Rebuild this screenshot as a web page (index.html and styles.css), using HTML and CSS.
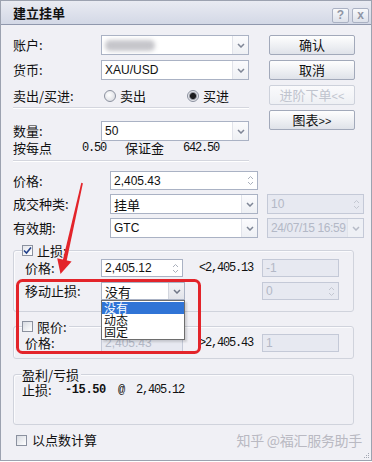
FILE: index.html
```html
<!DOCTYPE html>
<html lang="zh-CN">
<head>
    <meta charset="UTF-8">
    <meta name="viewport" content="width=device-width, initial-scale=1.0">
    <title>建立挂单</title>
    <link rel="stylesheet" href="styles.css">
</head>
<body>

<div class="dialog">
    <div class="titlebar">
        <span class="title">建立挂单</span>
        <div class="tb-btns">
            <span class="tb-btn">?</span>
            <span class="tb-btn">x</span>
        </div>
    </div>

    <div class="content">
        <div class="top">
            <div class="left">
                <div class="row">
                    <span>账户:</span>
                    <div class="field"><span class="val"><i class="blur"></i></span><span class="drop"><svg width="8" height="5"><path d="M1 1 L4 4 L7 1" stroke="#7f8696" stroke-width="1.5" fill="none"/></svg></span></div>
                </div>
                <div class="row r2">
                    <span>货币:</span>
                    <div class="field"><span class="val">XAU/USD</span><span class="drop"><svg width="8" height="5"><path d="M1 1 L4 4 L7 1" stroke="#7f8696" stroke-width="1.5" fill="none"/></svg></span></div>
                </div>
                <div class="row r3">
                    <span>卖出/买进:</span>
                    <div class="radios">
                        <label class="opt first"><i class="radio"></i>卖出</label>
                        <label class="opt"><i class="radio on"></i>买进</label>
                    </div>
                </div>
                <div class="sep"></div>
                <div class="row">
                    <span>数量:</span>
                    <div class="field"><span class="val">50</span><span class="drop"><svg width="8" height="5"><path d="M1 1 L4 4 L7 1" stroke="#7f8696" stroke-width="1.5" fill="none"/></svg></span></div>
                </div>
                <div class="info">
                    <span class="w69">按每点</span><span class="num w43">0.50</span><span class="w58">保证金</span><span class="num">642.50</span>
                </div>
                <div class="sep sep2"></div>
            </div>
            <div class="right">
                <button class="btn">确认</button>
                <button class="btn">取消</button>
                <button class="btn" disabled>进阶下单<span class="lat">&lt;&lt;</span></button>
                <button class="btn">图表<span class="lat">&gt;&gt;</span></button>
            </div>
        </div>

        <div class="grid3">
            <span>价格:</span>
            <div class="field h19"><span class="val">2,405.43</span><span class="arrows"><svg width="7" height="11"><path d="M1 4 L3.5 1.5 L6 4 M1 7 L3.5 9.5 L6 7" stroke="#aab0bc" stroke-width="1" fill="none"/></svg></span></div>
            <span></span>

            <span>成交种类:</span>
            <div class="field"><span class="val cn">挂单</span><span class="drop"><svg width="8" height="5"><path d="M1 1 L4 4 L7 1" stroke="#7f8696" stroke-width="1.5" fill="none"/></svg></span></div>
            <div class="field dis"><span class="val">10</span><span class="arrows"><svg width="7" height="11"><path d="M1 4 L3.5 1.5 L6 4 M1 7 L3.5 9.5 L6 7" stroke="#c3c7d1" stroke-width="1" fill="none"/></svg></span></div>

            <span>有效期:</span>
            <div class="field"><span class="val">GTC</span><span class="drop"><svg width="8" height="5"><path d="M1 1 L4 4 L7 1" stroke="#7f8696" stroke-width="1.5" fill="none"/></svg></span></div>
            <div class="field dis"><span class="val date">24/07/15 16:59</span><span class="drop"><svg width="8" height="5"><path d="M1 1 L4 4 L7 1" stroke="#b6bbc7" stroke-width="1.5" fill="none"/></svg></span></div>
        </div>

        <div class="group g1">
            <div class="legend"><i class="check on"><svg width="9" height="9"><path d="M1 4.5 L3.5 7 L8 1.5" stroke="#22418c" stroke-width="1.6" fill="none"/></svg></i>止损:</div>
            <div class="grow a">
                <span>价格:</span>
                <div class="field f82 h18"><span class="val">2,405.12</span><span class="arrows"><svg width="7" height="11"><path d="M1 4 L3.5 1.5 L6 4 M1 7 L3.5 9.5 L6 7" stroke="#aab0bc" stroke-width="1" fill="none"/></svg></span></div>
                <span class="num">&lt;2,405.13</span>
                <div class="field dis f77 h18"><span class="val">-1</span></div>
            </div>
            <div class="grow b">
                <span>移动止损:</span>
                <div class="combo-wrap">
                    <div class="field f84 h18"><span class="val cn">没有</span><span class="drop hot"><svg width="8" height="5"><path d="M1 1 L4 4 L7 1" stroke="#6f7686" stroke-width="1.5" fill="none"/></svg></span></div>
                    <ul class="list">
                        <li class="sel">没有</li>
                        <li>动态</li>
                        <li>固定</li>
                    </ul>
                </div>
                <span></span>
                <div class="field dis f77 h18"><span class="val">0</span><span class="arrows"><svg width="7" height="11"><path d="M1 4 L3.5 1.5 L6 4 M1 7 L3.5 9.5 L6 7" stroke="#c3c7d1" stroke-width="1" fill="none"/></svg></span></div>
            </div>
        </div>

        <div class="group g2">
            <div class="legend"><i class="check"></i>限价:</div>
            <div class="grow">
                <span>价格:</span>
                <div class="field dis f82 h18"><span class="val">2,405.43</span></div>
                <span class="num">&gt;2,405.43</span>
                <div class="field dis f77 h18"><span class="val">1</span></div>
            </div>
        </div>

        <div class="group g3">
            <div class="legend">盈利/亏损</div>
            <div class="pl">
                <span class="w43">止损:</span><span class="num b w53">-15.50</span><span class="num w18">@</span><span class="num">2,405.12</span>
            </div>
        </div>

        <div class="foot">
            <label class="opt"><i class="check"></i>以点数计算</label>
            <span class="wm">知乎 @福汇服务助手</span>
        </div>
    </div>

    <svg class="annot" width="372" height="462">
        <rect x="17.5" y="280.5" width="182" height="72" rx="5" fill="none" stroke="#e3242a" stroke-width="3"/>
        <polygon points="81.3,182.8 82.9,183.2 66.4,261.9 62.6,261.1" fill="#e3242a"/>
        <polygon points="60.5,274 57.2,258.2 71.6,261.6" fill="#e3242a"/>
    </svg>

    <svg class="grip" width="7" height="7"><path d="M5 1h1v1h-1zM3 3h1v1h-1zM5 3h1v1h-1zM1 5h1v1h-1zM3 5h1v1h-1zM5 5h1v1h-1z" fill="#a3a8b4"/></svg>
</div>

</body>
</html>
```

FILE: styles.css
```css
* { margin: 0; padding: 0; box-sizing: border-box; }
body {
    width: 372px; height: 462px; overflow: hidden; background: #fff;
    font: 13px/16px "Noto Sans CJK SC", sans-serif; color: #111;
}
.dialog {
    position: relative; width: 372px; height: 461px;
    border: 1px solid #9ca2b0; background: #f0f0f5;
}

/* title bar */
.titlebar {
    display: flex; align-items: center; justify-content: space-between;
    height: 24px; padding: 0 2px 0 12px;
    background: linear-gradient(#e9ebf2, #d3d8e6); border-bottom: 1px solid #9098ad;
}
.title { font-weight: bold; }
.tb-btns { display: flex; gap: 3px; align-self: flex-end; margin-bottom: 1px; }
.tb-btn {
    width: 17px; height: 15px; border: 1px solid #aab1c3; border-radius: 2px;
    background: linear-gradient(#f8f9fb, #dde1ea); color: #8f95a5;
    font: bold 12px/13px "Liberation Sans", sans-serif; text-align: center;
}

.content { padding: 10px 16px 0 12px; }
.top { display: flex; }
.left { width: 236px; }
.right { width: 86px; margin-left: 20px; display: flex; flex-direction: column; gap: 5px; }

.row { display: grid; grid-template-columns: 88px 148px; align-items: center; height: 20px; }
.r2 { margin-top: 5px; }
.r3 { margin-top: 6px; height: 19px; }
.sep { height: 2px; border-top: 1px solid #d4d6de; border-bottom: 1px solid #fff; margin: 2px 0 12px; }
.sep2 { margin: 5px 0 0; }
.info { display: flex; align-items: center; height: 14px; }
.w69 { width: 69px; } .w43 { width: 43px; } .w58 { width: 58px; }
.w53 { width: 53px; } .w18 { width: 18px; }
.num { font: 12px/14px "Liberation Mono", monospace; letter-spacing: -1.2px; }
.num.b { font-weight: bold; letter-spacing: -0.4px; }

/* inputs */
.field {
    display: flex; height: 20px; border: 1px solid #aab2c4; background: #fff;
    font: 12px "Liberation Sans", sans-serif; color: #111;
}
.h19 { height: 19px; } .h18 { height: 18px; }
.f82 { width: 82px; } .f84 { width: 84px; } .f77 { width: 77px; }
.val { flex: 1; display: flex; align-items: center; padding-left: 3px; white-space: nowrap; overflow: hidden; }
.val.cn { font: 13px "Noto Sans CJK SC", sans-serif; }
.val.date { letter-spacing: -0.4px; }
.drop {
    width: 16px; display: flex; align-items: center; justify-content: center;
    border-left: 1px solid #e1e3ea; background: linear-gradient(#fbfbfd, #eef0f4);
}
.drop.hot { background: linear-gradient(#f2f3f6, #e2e4ea); border-left-color: #d3d6de; }
.arrows { width: 14px; display: flex; align-items: center; justify-content: center; }
.dis { background: #e7e9f1; border-color: #c4c9d7; color: #b3b8c6; }
.dis .drop { background: #eef0f5; border-left-color: #e0e3ea; }
.blur { display: block; width: 50px; height: 11px; border-radius: 5px; background: #c6c6cb; filter: blur(2px); }

/* radios and checks */
.radios { display: flex; align-items: center; }
.opt { display: flex; align-items: center; gap: 4px; }
.opt.first { width: 86px; padding-left: 3px; }
.radio {
    width: 12px; height: 12px; border-radius: 50%; border: 1px solid #8b919f;
    background: radial-gradient(circle at 40% 40%, #fff, #d3d5dc);
}
.radio.on { background: radial-gradient(circle, #1d1d1f 0 2.6px, #8a8d96 3.4px, #e6e7ec 4.5px); }
.check {
    display: flex; align-items: center; justify-content: center;
    width: 11px; height: 11px; border: 1px solid #8b919f;
    background: linear-gradient(135deg, #d8dbe2, #fff);
}
.check.on { background: linear-gradient(135deg, #e4e6ec, #fff); }

/* buttons */
.btn {
    height: 20px; border: 1px solid #a2a9ba; border-radius: 2px;
    background: linear-gradient(#fefefe, #eceef2 60%, #dfe2e9);
    font: 13px/18px "Noto Sans CJK SC", sans-serif; color: #111; text-align: center;
}
.btn:disabled { color: #c0c4ce; border-color: #cdd1db; background: linear-gradient(#fafafc, #eef0f4); }
.lat { font-family: "Liberation Sans", sans-serif; font-size: 11px; }

.grid3 {
    display: grid; grid-template-columns: 88px 148px 97px; column-gap: 9px; row-gap: 4px;
    align-items: center; margin-top: 9px;
}

/* group boxes */
.group {
    border: 1px solid #d0d3dc; border-radius: 3px; margin-right: 1px; padding-left: 11px;
    box-shadow: inset 1px 1px 0 #fbfbfd;
}
.legend {
    display: flex; align-items: center; gap: 4px; width: max-content; height: 13px;
    margin: -7px 0 0 -3px; padding-right: 2px; background: #f0f0f5; line-height: 13px;
}
.grow { display: grid; grid-template-columns: 76px 98px 63px 77px; align-items: center; height: 18px; }
.g1 { margin-top: 12px; padding-bottom: 11px; }
.g1 .a { margin-top: 1px; height: 20px; }
.g1 .b { margin-top: 4px; }
.g2 { margin-top: 14px; padding-bottom: 6px; }
.g2 .grow { margin-top: 1px; }
.g3 { margin-top: 15px; padding-bottom: 27px; }
.pl { display: flex; align-items: center; height: 14px; margin: 2px 0 0 -3px; }

/* drop list */
.combo-wrap { position: relative; }
.list {
    position: absolute; top: 100%; left: 0; width: 84px; z-index: 3;
    border: 1px solid #6e6e6e; background: #fff; padding: 1px 0;
    box-shadow: 2px 2px 2px rgba(0, 0, 0, 0.15);
    font-size: 12px; line-height: 12px; list-style: none;
}
.list li { height: 12px; padding-left: 2px; }
.list .sel { background: #3074d6; color: #fff; }

.foot { display: flex; justify-content: space-between; align-items: center; height: 14px; margin-top: 8px; padding-left: 3px; }
.foot .opt { gap: 5px; }
.wm { font-size: 14px; color: #b9b9c2; margin-right: -7px; letter-spacing: -0.3px; }

.annot { position: absolute; top: -1px; left: -1px; z-index: 5; pointer-events: none; }
.grip { position: absolute; right: 1px; bottom: 1px; }
```
